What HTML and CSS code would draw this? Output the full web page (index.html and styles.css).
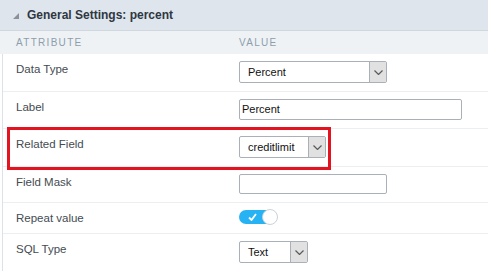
FILE: index.html
```html
<!DOCTYPE html>
<html lang="en">

<head>
  <meta charset="UTF-8" />
  <title>General Settings</title>
  <link rel="stylesheet" href="styles.css">
</head>

<body>
  <div class="panel">
    <div class="panel-title">
      <svg class="caret" width="6" height="6" viewBox="0 0 6 6"><polygon points="6,0 6,6 0,6" /></svg>
      General Settings: percent
    </div>
    <div class="col-head">
      <div>Attribute</div>
      <div>Value</div>
    </div>
    <div class="rows">
      <div class="row">
        <div class="attr">Data Type</div>
        <div class="value">
          <div class="select w-type"><span class="select-text">Percent</span><span class="select-btn"><svg width="9" height="5" viewBox="0 0 9 5"><polyline points="0.5,0.5 4.5,4.5 8.5,0.5" /></svg></span></div>
        </div>
      </div>
      <div class="row">
        <div class="attr">Label</div>
        <div class="value">
          <div class="input w-label">Percent</div>
        </div>
      </div>
      <div class="row">
        <div class="attr">Related Field</div>
        <div class="value">
          <div class="select w-related"><span class="select-text">creditlimit</span><span class="select-btn"><svg width="9" height="5" viewBox="0 0 9 5"><polyline points="0.5,0.5 4.5,4.5 8.5,0.5" /></svg></span></div>
        </div>
      </div>
      <div class="row">
        <div class="attr">Field Mask</div>
        <div class="value">
          <div class="input w-mask"></div>
        </div>
      </div>
      <div class="row">
        <div class="attr">Repeat value</div>
        <div class="value">
          <div class="toggle">
            <svg class="check" width="9" height="8" viewBox="0 0 9 8"><polyline points="1,4.5 3.5,7 8,1" /></svg>
            <span class="knob"></span>
          </div>
        </div>
      </div>
      <div class="row">
        <div class="attr">SQL Type</div>
        <div class="value">
          <div class="select w-sql"><span class="select-text">Text</span><span class="select-btn"><svg width="9" height="5" viewBox="0 0 9 5"><polyline points="0.5,0.5 4.5,4.5 8.5,0.5" /></svg></span></div>
        </div>
      </div>
    </div>
    <div class="highlight"></div>
  </div>
</body>

</html>
```

FILE: styles.css
```css
body {
  margin: 0;
  background-color: #ffffff;
  font-family: "Liberation Sans", Arial, sans-serif;
  color: #444b52;
}

.panel {
  position: relative;
  height: 271px;
  overflow: hidden;
}

.panel-title {
  display: flex;
  align-items: center;
  gap: 8px;
  height: 31px;
  padding-left: 13px;
  background-color: #dfe5ec;
  border-bottom: 1px solid #cfd7df;
  font-size: 12px;
  font-weight: bold;
  color: #2e3742;
  box-sizing: border-box;
  padding-top: 0;
}

.caret {
  fill: #8b9199;
  margin-top: 2px;
}

.col-head {
  display: grid;
  grid-template-columns: 239px 1fr;
  height: 23px;
  align-items: center;
  background-color: #eef2f5;
  font-size: 10px;
  letter-spacing: 1.3px;
  text-transform: uppercase;
  color: #8d9eac;
}

.col-head div:first-child {
  padding-left: 16px;
}

.rows {
  margin-left: 2px;
  border-left: 1px solid #dbe2e8;
}

.row {
  display: grid;
  grid-template-columns: 236px 1fr;
  padding: 7px 0 8px;
  border-bottom: 1px solid #eceff2;
}

.attr {
  padding-left: 13px;
  margin-top: 1px;
  font-size: 11.5px;
  line-height: 14px;
}

.value {
  display: flex;
  align-items: flex-start;
  font-size: 11px;
  color: #111111;
}

.select {
  display: flex;
  height: 22px;
  border: 1px solid #aab0b7;
  border-radius: 2px;
  box-sizing: border-box;
  background-color: #ffffff;
}

.select-text {
  flex: 1;
  padding-left: 8px;
  line-height: 20px;
}

.select-btn {
  display: flex;
  align-items: center;
  justify-content: center;
  width: 16px;
  background-color: #e1e1e1;
  border-left: 1px solid #aab0b7;
}

.select-btn svg {
  fill: none;
  stroke: #5a5a5a;
  stroke-width: 1.2;
}

.w-type {
  width: 148px;
}

.w-related {
  width: 87px;
}

.w-sql {
  width: 69px;
}

.input {
  height: 21px;
  border: 1px solid #aab0b7;
  border-radius: 2px;
  box-sizing: border-box;
  padding-left: 2px;
  line-height: 19px;
}

.w-label {
  width: 223px;
}

.w-mask {
  width: 148px;
  height: 20px;
}

.toggle {
  position: relative;
  width: 38px;
  height: 14px;
  border-radius: 7px;
  background-color: #27b2f3;
}

.check {
  position: absolute;
  left: 9px;
  top: 3px;
  fill: none;
  stroke: #ffffff;
  stroke-width: 1.8;
}

.knob {
  position: absolute;
  right: -1px;
  top: -1px;
  width: 14px;
  height: 14px;
  border-radius: 50%;
  background-color: #ffffff;
  border: 1px solid #c9d3db;
}

.highlight {
  position: absolute;
  left: 7px;
  top: 127px;
  width: 324px;
  height: 43px;
  border: 3px solid #e3141f;
  box-sizing: border-box;
}
```
